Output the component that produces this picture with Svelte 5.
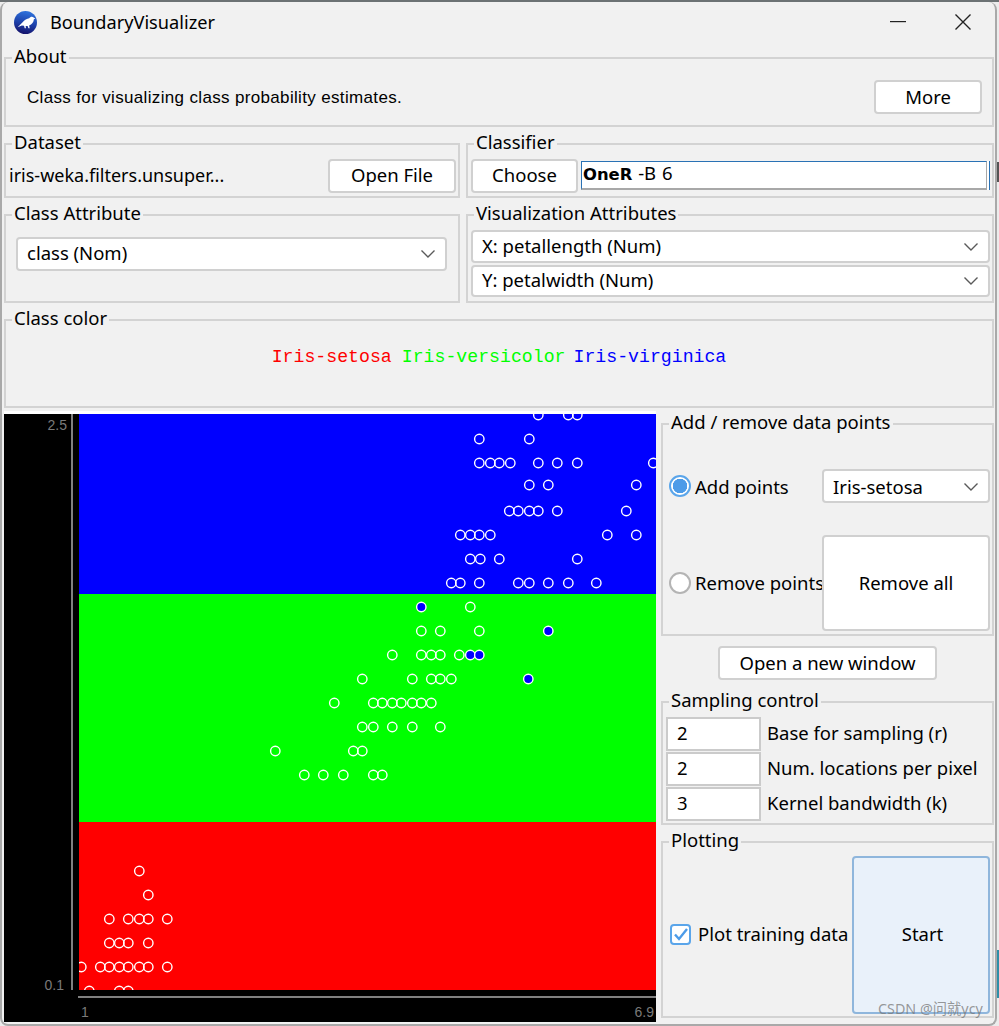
<script>
  const rows = [
    { y: 415, open: [538, 568, 577] },
    { y: 439, open: [479, 529] },
    { y: 463, open: [479, 490, 499, 510, 538, 557, 577, 653] },
    { y: 485, open: [529, 548, 636] },
    { y: 511, open: [509, 518, 529, 538, 557, 626] },
    { y: 535, open: [460, 470, 479, 490, 607, 636] },
    { y: 559, open: [470, 480, 499, 577] },
    { y: 583, open: [451, 460, 479, 518, 529, 548, 568, 596] },
    { y: 607, open: [470], filled: [421] },
    { y: 631, open: [421, 440, 479], filled: [548] },
    { y: 655, open: [392, 421, 431, 440, 459], filled: [470, 479] },
    { y: 679, open: [362, 412, 431, 440, 451], filled: [528] },
    { y: 703, open: [334, 373, 382, 392, 401, 412, 421, 431] },
    { y: 727, open: [362, 373, 392, 412, 440] },
    { y: 751, open: [275, 353, 362] },
    { y: 775, open: [304, 323, 343, 373, 382] },
    { y: 871, open: [139] },
    { y: 895, open: [148] },
    { y: 919, open: [109, 128, 139, 148, 167] },
    { y: 943, open: [109, 119, 128, 148] },
    { y: 967, open: [81, 100, 109, 119, 128, 139, 148, 167] },
    { y: 991, open: [89, 119, 128] }
  ];
  const sampling = [
    { value: '2', label: 'Base for sampling (r)' },
    { value: '2', label: 'Num. locations per pixel' },
    { value: '3', label: 'Kernel bandwidth (k)' }
  ];
</script>

{#snippet chevron()}
  <svg class="chev" width="16" height="10" viewBox="0 0 16 10" aria-hidden="true">
    <polyline points="1.5,1.5 8,8 14.5,1.5" fill="none" stroke="#5a5a5a" stroke-width="1.4" />
  </svg>
{/snippet}

<div class="window">
  <header class="titlebar">
    <svg class="logo" width="23" height="23" viewBox="0 0 22 22" aria-hidden="true">
      <defs>
        <linearGradient id="lg" x1="0.6" y1="0" x2="0.4" y2="1">
          <stop offset="0" stop-color="#2f74de" />
          <stop offset="0.55" stop-color="#1c3fa8" />
          <stop offset="1" stop-color="#15126a" />
        </linearGradient>
      </defs>
      <circle cx="11" cy="11" r="11" fill="url(#lg)" />
      <path d="M3.5 15.5 L8 11 C10 8.5 12.5 7.5 14.5 7 C15.5 5.2 18 5 19 6.5 L20.5 7.2 L19 8 C19 10.5 17 13 14.5 13.8 L15 16.5 L13.8 16.5 L13 14.3 L11.2 14.4 L11.4 16.5 L10.2 16.5 L9.6 14 L7.5 13.8 Z" fill="#fff" />
    </svg>
    <span class="title">BoundaryVisualizer</span>
    <svg class="min" width="16" height="2" viewBox="0 0 16 2" aria-hidden="true"><rect width="16" height="1.2" fill="#222" /></svg>
    <svg class="close" width="18" height="18" viewBox="0 0 18 18" aria-hidden="true">
      <path d="M1.5 1.5 L16.5 16.5 M16.5 1.5 L1.5 16.5" stroke="#222" stroke-width="1.4" fill="none" />
    </svg>
  </header>

  <div class="stack">
    <section class="group about">
      <span class="legend">About</span>
      <p class="desc">Class for visualizing class probability estimates.</p>
      <button class="btn more">More</button>
    </section>

    <div class="two">
      <section class="group dataset">
        <span class="legend">Dataset</span>
        <span class="dataset-name">iris-weka.filters.unsuper...</span>
        <button class="btn open raised">Open File</button>
      </section>
      <section class="group classifier">
        <span class="legend">Classifier</span>
        <button class="btn choose raised">Choose</button>
        <div class="field"><b>OneR</b> -B 6</div>
        <div class="field-tail"></div>
      </section>
    </div>

    <div class="two">
      <section class="group attr">
        <span class="legend">Class Attribute</span>
        <div class="select attr-select">class (Nom){@render chevron()}</div>
      </section>
      <section class="group vis">
        <span class="legend">Visualization Attributes</span>
        <div class="select">X: petallength (Num){@render chevron()}</div>
        <div class="select">Y: petalwidth (Num){@render chevron()}</div>
      </section>
    </div>

    <section class="group colors">
      <span class="legend">Class color</span>
      <div class="names">
        <span class="setosa">Iris-setosa</span><span class="versicolor">Iris-versicolor</span><span class="virginica">Iris-virginica</span>
      </div>
    </section>
  </div>

  <div class="lower">
    <svg class="plot" width="652" height="611" viewBox="4 411 652 611" shape-rendering="crispEdges">
      <rect x="4" y="411" width="652" height="611" fill="#000" />
      <rect x="4" y="411" width="652" height="3" fill="#fff" />
      <rect x="79" y="414" width="577" height="180" fill="#0000ff" />
      <rect x="79" y="594" width="577" height="228" fill="#00ff00" />
      <rect x="79" y="822" width="577" height="168" fill="#ff0000" />
      <rect x="71" y="414" width="2" height="576" fill="#808080" />
      <rect x="78" y="996" width="578" height="2" fill="#808080" />
      <clipPath id="area"><rect x="79" y="414" width="577" height="576" /></clipPath>
      <g clip-path="url(#area)" shape-rendering="auto">
        {#each rows as row}
          {#each row.open as x}
            <circle cx={x + 0.3} cy={row.y} r="4.7" fill="none" stroke="#fff" stroke-width="1.4" />
          {/each}
          {#each row.filled ?? [] as x}
            <circle cx={x + 0.3} cy={row.y} r="4.7" fill="#0000ff" stroke="#fff" stroke-width="1.4" />
          {/each}
        {/each}
      </g>
      <g class="ticks" shape-rendering="auto">
        <text x="67" y="430" text-anchor="end">2.5</text>
        <text x="64" y="990" text-anchor="end">0.1</text>
        <text x="81" y="1017">1</text>
        <text x="654" y="1017" text-anchor="end">6.9</text>
      </g>
    </svg>

    <aside class="side">
      <section class="group points">
        <span class="legend">Add / remove data points</span>
        <label class="radio-row"><span class="radio on"></span><span class="add-label">Add points</span></label>
        <div class="select small">Iris-setosa{@render chevron()}</div>
        <label class="radio-row"><span class="radio"></span>Remove points</label>
        <button class="btn remove">Remove all</button>
      </section>

      <button class="btn newwin">Open a new window</button>

      <section class="group sampling">
        <span class="legend">Sampling control</span>
        {#each sampling as item}
          <div class="sample-row">
            <input class="num" value={item.value} readonly />
            <span class="sample-label">{item.label}</span>
          </div>
        {/each}
      </section>

      <section class="group plotting">
        <span class="legend">Plotting</span>
        <label class="check-row">
          <span class="check">
            <svg width="16" height="14" viewBox="0 0 16 14" aria-hidden="true">
              <path d="M2 7.5 L6 12 L14 2" fill="none" stroke="#4c9be8" stroke-width="2.4" />
            </svg>
          </span>
          Plot training data
        </label>
        <button class="btn start raised">Start</button>
      </section>
    </aside>
  </div>

  <span class="watermark">CSDN @问就ycy</span>
</div>
<div class="edge-dark"></div>
<div class="edge-teal"></div>

<style>
  :global(html),
  :global(body) {
    background: linear-gradient(#6c7274 2px, #ececec 2px);
  }
  :global(body) {
    margin: 0;
    overflow: hidden;
  }
  .window {
    position: relative;
    box-sizing: border-box;
    width: 997px;
    height: 1024px;
    margin-top: 2px;
    background: #f1f1f1;
    border: 2px solid #a9a9a9;
    border-top: 0;
    border-radius: 8px;
    color: #000;
    font: 18.5px/24px "Noto Sans", "Noto Sans CJK SC", sans-serif;
    overflow: hidden;
  }
  .titlebar {
    display: flex;
    align-items: center;
    height: 44px;
    padding: 0 23px 4px 12px;
    box-sizing: border-box;
  }
  .title {
    margin-left: 13px;
    flex: 1;
    font-size: 18.2px;
  }
  .min {
    margin-right: 48px;
  }
  .stack {
    display: flex;
    flex-direction: column;
    gap: 16px;
    padding: 11px 1px 0 2px;
  }
  .two {
    display: flex;
    gap: 6px;
  }
  .group {
    position: relative;
    box-sizing: border-box;
    border: 2px solid #d3d3d3;
  }
  .legend {
    position: absolute;
    top: -17px;
    left: 6px;
    padding: 0 2px;
    background: #f1f1f1;
    line-height: 28px;
    white-space: nowrap;
  }
  .btn {
    box-sizing: border-box;
    height: 34px;
    padding: 0;
    background: #fff;
    border: 2px solid #d0d0d0;
    border-radius: 4px;
    color: #000;
    font: inherit;
  }
  .raised {
    padding-bottom: 2px;
  }
  .select {
    display: flex;
    align-items: center;
    justify-content: space-between;
    box-sizing: border-box;
    height: 33px;
    padding: 0 9px 2px;
    background: #fff;
    border: 2px solid #d0d0d0;
    border-radius: 4px;
  }
  .chev {
    flex: none;
    margin-top: 2px;
  }
  .about {
    display: flex;
    align-items: center;
    justify-content: space-between;
    height: 70px;
    padding: 10px 10px 0 21px;
  }
  .desc {
    margin: 0;
    padding-top: 2px;
    font: 17px/24px "Liberation Sans", sans-serif;
    letter-spacing: 0.34px;
  }
  .more {
    width: 108px;
  }
  .dataset {
    display: flex;
    align-items: flex-start;
    justify-content: space-between;
    width: 456px;
    height: 55px;
    padding: 14px 2px 0 3px;
  }
  .dataset-name {
    font-size: 18px;
    line-height: 32px;
  }
  .open {
    width: 128px;
  }
  .classifier {
    display: flex;
    align-items: flex-start;
    width: 528px;
    height: 55px;
    padding: 14px 2px 0 3px;
  }
  .choose {
    flex: none;
    width: 107px;
  }
  .field {
    box-sizing: border-box;
    width: 407px;
    height: 29px;
    margin: 2px 0 0 3px;
    padding: 0 0 0 1px;
    background: #fff;
    border-top: 1px solid #2a72b5;
    border-left: 1px solid #2a72b5;
    border-right: 1px solid #a8a8a8;
    border-bottom: 2px solid #a8a8a8;
    line-height: 22px;
    font-size: 18.5px;
    word-spacing: 1px;
  }
  .field b {
    font: bold 16.4px/22px "DejaVu Sans", sans-serif;
  }
  .field-tail {
    box-sizing: border-box;
    width: 3px;
    height: 29px;
    margin-top: 2px;
    background: #fff;
    border-right: 1px solid #2a72b5;
  }
  .attr {
    width: 456px;
    height: 89px;
    padding: 21px 11px 0 10px;
  }
  .attr-select {
    height: 34px;
    padding-left: 9px;
  }
  .vis {
    display: flex;
    flex-direction: column;
    gap: 2px;
    width: 528px;
    height: 89px;
    padding: 14px 2px 0 3px;
  }
  .vis .select:last-child {
    height: 32px;
  }
  .colors {
    display: flex;
    align-items: center;
    justify-content: center;
    height: 89px;
    padding-bottom: 14px;
  }
  .names {
    font: 18.2px/24px "Liberation Mono", monospace;
  }
  .setosa {
    color: #ff0000;
    margin-right: 10px;
  }
  .versicolor {
    color: #00ff00;
    margin-right: 8px;
  }
  .virginica {
    color: #0000ff;
  }
  .lower {
    display: flex;
    margin-top: 3px;
    padding-left: 2px;
  }
  .plot {
    display: block;
    flex: none;
  }
  .ticks text {
    fill: #7a7a7a;
    font: 14px "Liberation Sans", sans-serif;
  }
  .side {
    display: flex;
    flex-direction: column;
    flex: none;
    width: 333px;
    margin-left: 5px;
    padding-top: 12px;
  }
  .points {
    display: grid;
    grid-template-columns: minmax(0, 1fr) 168px;
    grid-template-rows: 34px 96px;
    row-gap: 32px;
    align-items: center;
    height: 213px;
    padding: 44px 2px 3px 6px;
  }
  .small {
    height: 34px;
    padding: 2px 9px 0;
  }
  .small .chev {
    margin-top: 0;
  }
  .radio-row {
    display: flex;
    align-items: center;
    gap: 4px;
    min-width: 0;
    white-space: nowrap;
  }
  .add-label {
    padding-top: 2px;
  }
  .radio {
    box-sizing: border-box;
    width: 22px;
    height: 22px;
    flex: none;
    background: #fff;
    border: 2px solid #b4b4b4;
    border-radius: 50%;
  }
  .radio.on {
    border-color: #5aa5ea;
    background: radial-gradient(circle, #4c9be8 0 7px, #fff 7.5px);
  }
  .remove {
    height: 96px;
  }
  .newwin {
    align-self: center;
    width: 219px;
    margin: 10px 0 21px;
  }
  .sampling {
    display: flex;
    flex-direction: column;
    gap: 1px;
    height: 124px;
    padding: 14px 0 0 3px;
  }
  .sample-row {
    display: flex;
    align-items: center;
    gap: 6px;
  }
  .sample-label {
    padding-bottom: 2px;
  }
  .num {
    box-sizing: border-box;
    width: 95px;
    height: 34px;
    padding: 0 9px 4px;
    background: #fff;
    border: 2px solid #cbcbcb;
    border-radius: 0;
    outline: 0;
    color: #000;
    font: inherit;
  }
  .plotting {
    display: flex;
    align-items: center;
    justify-content: space-between;
    height: 177px;
    margin-top: 16px;
    padding: 13px 2px 4px 7px;
  }
  .check-row {
    display: flex;
    align-items: center;
    gap: 7px;
    white-space: nowrap;
  }
  .check {
    display: flex;
    align-items: center;
    justify-content: center;
    box-sizing: border-box;
    width: 21px;
    height: 21px;
    background: #fff;
    border: 2px solid #5aa5ea;
    border-radius: 4px;
  }
  .start {
    align-self: flex-start;
    flex: none;
    width: 138px;
    height: 158px;
    padding-left: 3px;
    background: #e9f1fa;
    border-color: #8fb6dc;
  }
  .watermark {
    position: absolute;
    left: 876px;
    top: 995px;
    color: rgba(120, 120, 120, 0.75);
    font-size: 14.3px;
    line-height: 24px;
    white-space: nowrap;
  }
  .edge-dark {
    position: fixed;
    left: 997px;
    top: 162px;
    width: 2px;
    height: 20px;
    background: #555;
  }
  .edge-teal {
    position: fixed;
    left: 997px;
    top: 950px;
    width: 2px;
    height: 48px;
    background: #2f8fa8;
  }
</style>
